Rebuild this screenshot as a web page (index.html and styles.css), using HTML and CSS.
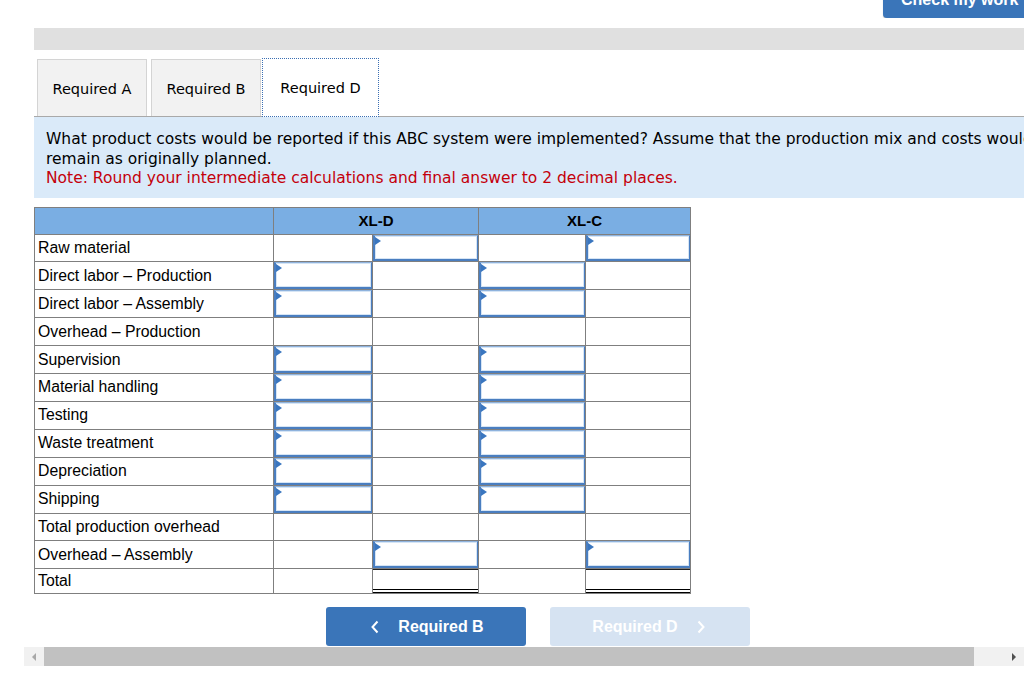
FILE: index.html
```html
<!DOCTYPE html>
<html>
<head>
<meta charset="utf-8">
<link rel="stylesheet" href="styles.css">
</head>
<body>
<div class="topbar"><button class="check">Check my work</button></div>
<div class="frame">
  <div class="content">
    <div class="graybar"></div>
    <div class="tabs">
      <div class="tab">Required A</div>
      <div class="tab">Required B</div>
      <div class="tab active">Required D</div>
    </div>
    <div class="info">
      <p class="q">What product costs would be reported if this ABC system were implemented? Assume that the production mix and costs would<br>remain as originally planned.</p>
      <p class="note">Note: Round your intermediate calculations and final answer to 2 decimal places.</p>
    </div>
    <div class="grid">
      <div class="hd"></div>
      <div class="hd span2">XL-D</div>
      <div class="hd span2">XL-C</div>

      <div class="lbl">Raw material</div>
      <div class="c"></div><div class="c"><div class="inp"></div></div><div class="c"></div><div class="c"><div class="inp"></div></div>

      <div class="lbl">Direct labor – Production</div>
      <div class="c"><div class="inp"></div></div><div class="c"></div><div class="c"><div class="inp"></div></div><div class="c"></div>

      <div class="lbl">Direct labor – Assembly</div>
      <div class="c"><div class="inp"></div></div><div class="c"></div><div class="c"><div class="inp"></div></div><div class="c"></div>

      <div class="lbl">Overhead – Production</div>
      <div class="c"></div><div class="c"></div><div class="c"></div><div class="c"></div>

      <div class="lbl">Supervision</div>
      <div class="c"><div class="inp"></div></div><div class="c"></div><div class="c"><div class="inp"></div></div><div class="c"></div>

      <div class="lbl">Material handling</div>
      <div class="c"><div class="inp"></div></div><div class="c"></div><div class="c"><div class="inp"></div></div><div class="c"></div>

      <div class="lbl">Testing</div>
      <div class="c"><div class="inp"></div></div><div class="c"></div><div class="c"><div class="inp"></div></div><div class="c"></div>

      <div class="lbl">Waste treatment</div>
      <div class="c"><div class="inp"></div></div><div class="c"></div><div class="c"><div class="inp"></div></div><div class="c"></div>

      <div class="lbl">Depreciation</div>
      <div class="c"><div class="inp"></div></div><div class="c"></div><div class="c"><div class="inp"></div></div><div class="c"></div>

      <div class="lbl">Shipping</div>
      <div class="c"><div class="inp"></div></div><div class="c"></div><div class="c"><div class="inp"></div></div><div class="c"></div>

      <div class="lbl">Total production overhead</div>
      <div class="c"></div><div class="c"></div><div class="c"></div><div class="c"></div>

      <div class="lbl">Overhead – Assembly</div>
      <div class="c"></div><div class="c"><div class="inp"></div></div><div class="c"></div><div class="c"><div class="inp"></div></div>

      <div class="lbl">Total</div>
      <div class="c"></div><div class="c total"></div><div class="c"></div><div class="c total"></div>
    </div>
    <div class="nav">
      <button class="navbtn prev"><svg width="10" height="14" viewBox="0 0 10 14"><path d="M7.5 1.5 L2.5 7 L7.5 12.5" fill="none" stroke="#fff" stroke-width="2"/></svg><span>Required B</span></button>
      <button class="navbtn next"><span>Required D</span><svg width="10" height="14" viewBox="0 0 10 14"><path d="M2.5 1.5 L7.5 7 L2.5 12.5" fill="none" stroke="#fff" stroke-width="2"/></svg></button>
    </div>
  </div>
</div>
<div class="hscroll">
  <div class="arrow left"><svg width="6" height="10" viewBox="0 0 6 10"><path d="M5 1 L1 5 L5 9 Z" fill="#a8a8a8"/></svg></div>
  <div class="track"><div class="thumb"></div></div>
  <div class="arrow right"><svg width="6" height="10" viewBox="0 0 6 10"><path d="M1 1 L5 5 L1 9 Z" fill="#505050"/></svg></div>
</div>
</body>
</html>
```
FILE: styles.css
```css
html, body {
  margin: 0;
  padding: 0;
  overflow: hidden;
  background: #fff;
  width: 1024px;
  height: 673px;
}
body {
  font-family: "Liberation Sans", Arial, sans-serif;
  color: #000;
}
.topbar {
  height: 18px;
  padding-left: 883px;
  overflow: hidden;
  display: flex;
}
.check {
  margin-top: -18px;
  height: 36px;
  width: 160px;
  flex: none;
  border: none;
  border-radius: 0 0 0 4px;
  background: #3a75b9;
  color: #fff;
  font-family: "Liberation Sans", Arial, sans-serif;
  font-weight: bold;
  font-size: 16px;
  text-align: left;
  padding: 0 0 0 18px;
  box-shadow: 0 1px 1px rgba(0,0,0,0.25);
}
.frame {
  margin-left: 24px;
  width: 1000px;
  overflow: hidden;
}
.content {
  width: 1010px;
  padding-left: 10px;
}
.graybar {
  margin-top: 10px;
  height: 22px;
  background: #e0e0e0;
}
.tabs {
  margin-top: 9px;
  margin-left: 3px;
  height: 57px;
  display: flex;
  gap: 4px;
  font-family: "DejaVu Sans", Verdana, sans-serif;
  font-size: 14.5px;
}
.tab {
  width: 108px;
  background: #f2f2f2;
  border: 1px solid #d4d4d4;
  border-bottom: none;
  display: flex;
  align-items: center;
  justify-content: center;
  padding-top: 1px;
  box-sizing: content-box;
  height: 55px;
}
.tab.active {
  margin-left: -3px;
  width: 115px;
  height: 56px;
  margin-top: -1px;
  background: #fff;
  border: 1px dotted #3b6fb3;
  position: relative;
  z-index: 1;
}
.info {
  border-top: 1px solid #a9a9a9;
  background: #daeaf9;
  padding: 13px 12px 9px 12px;
  font-family: "DejaVu Sans", Verdana, sans-serif;
  font-size: 15.5px;
  line-height: 19.5px;
  white-space: nowrap;
}
.info p {
  margin: 0;
}
.note {
  color: #c4000b;
}
.grid {
  margin-top: 9px;
  width: 655px;
  display: grid;
  grid-template-columns: 238px 98px 105px 106px 104px;
  grid-template-rows: 26px repeat(12, 26.92px) 24px;
  gap: 1px;
  background: #7f7f7f;
  border: 1px solid #7f7f7f;
}
.hd {
  background: #7aaee3;
  font-weight: bold;
  font-size: 15px;
  display: flex;
  align-items: center;
  justify-content: center;
}
.span2 {
  grid-column: span 2;
}
.lbl {
  background: #fff;
  font-size: 15.8px;
  padding-left: 3px;
  display: flex;
  align-items: center;
}
.c {
  background: #fff;
  position: relative;
}
.inp {
  position: absolute;
  inset: 0;
  border: 1px solid #4a7ec0;
  border-left-width: 2px;
  border-bottom-width: 2px;
  border-top-color: #8fb3dd;
  box-shadow: inset 0 0 0 1px #d6e5f5;
  background: #fff;
}
.inp::before {
  content: "";
  position: absolute;
  left: 0;
  top: 1px;
  border-left: 6px solid #3a76bf;
  border-top: 4px solid transparent;
  border-bottom: 4px solid transparent;
}
.total {
  border-top: 1px solid #222;
  border-bottom: 4px double #000;
}
.nav {
  margin-top: 13px;
  margin-left: 292px;
  display: flex;
  gap: 24px;
}
.navbtn {
  width: 200px;
  height: 39px;
  border: none;
  border-radius: 3px;
  color: #fff;
  font-family: "Liberation Sans", Arial, sans-serif;
  font-weight: bold;
  font-size: 16px;
  display: flex;
  align-items: center;
  justify-content: center;
  gap: 18px;
  padding: 0;
}
.prev {
  background: #3a75b9;
  padding-left: 2px;
}
.next {
  background: #d6e3f2;
  padding-right: 2px;
}
.hscroll {
  margin-top: 1px;
  margin-left: 24px;
  width: 1000px;
  height: 19px;
  background: #f1f1f1;
  display: flex;
  align-items: stretch;
}
.arrow {
  width: 20px;
  display: flex;
  align-items: center;
  justify-content: center;
}
.track {
  flex: 1;
  display: flex;
}
.thumb {
  width: 930px;
  background: #c1c1c1;
}
```
